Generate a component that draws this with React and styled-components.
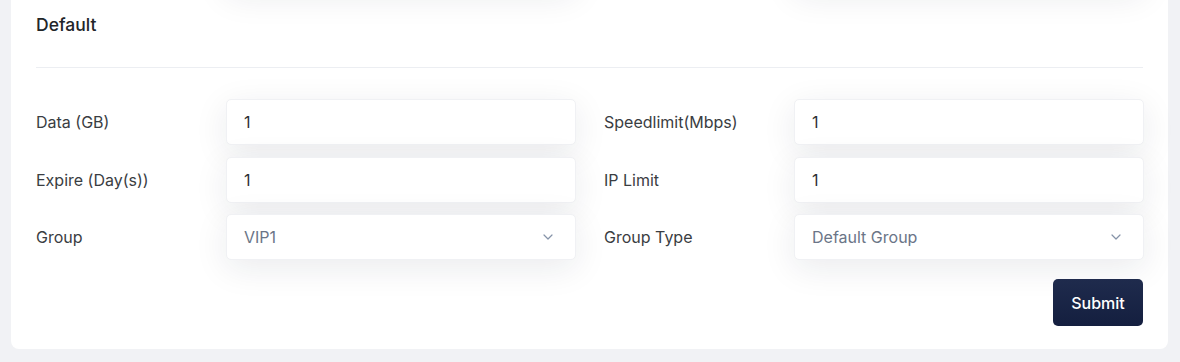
import React from 'react';
import styled, { createGlobalStyle } from 'styled-components';

const GlobalStyle = createGlobalStyle`
  html, body {
    margin: 0;
    padding: 0;
    background: #f1f2f5;
    font-family: Inter, "Noto Sans", sans-serif;
  }
  html {
    overflow: hidden;
  }
`;

const Page = styled.div`
  display: flow-root;
  padding: 0 12px 13px 11px;
`;

const Card = styled.div`
  margin-top: -100px;
  background: #fff;
  border-radius: 8px;
  padding: 42px 25px 23px;
`;

const FieldGrid = styled.div`
  display: grid;
  grid-template-columns: 190px 350px 218px 350px;
  row-gap: 11.5px;
  align-items: center;
`;

const Header = styled.div`
  padding: 13px 0 30px;
  margin-top: 12px;
  border-bottom: 1px solid #eceef2;
  margin-bottom: 31px;
`;

const Title = styled.h3`
  margin: 0;
  font-size: 17.5px;
  line-height: 24px;
  font-weight: 500;
  color: #222529;
`;

const Label = styled.label`
  font-size: 16px;
  font-weight: 400;
  color: #3a3d42;
  padding-left: ${p => (p.$second ? '28px' : '0')};
`;

const Field = styled.div`
  height: 46px;
  box-sizing: border-box;
  background: #fff;
  border: 1px solid #f0f1f4;
  border-radius: 5px;
  box-shadow: 0 8px 34px rgba(20, 30, 50, 0.09);
  padding: 0 20px 0 17px;
  display: flex;
  align-items: center;
  justify-content: space-between;
  font-size: 16px;
  color: ${p => (p.$muted ? '#6b7587' : '#2c2f33')};
`;

const Chevron = styled.svg`
  width: 10px;
  height: 6px;
  color: #8593a8;
  margin-right: 2px;
`;

const Actions = styled.div`
  display: flex;
  justify-content: flex-end;
  margin-top: 19px;
`;

const SubmitButton = styled.button`
  width: 90px;
  height: 47px;
  border: none;
  border-radius: 5px;
  background: linear-gradient(180deg, #1f2b4d 0%, #141f3f 100%);
  color: #fff;
  font-family: Inter, "Noto Sans", sans-serif;
  font-size: 16px;
  font-weight: 500;
  cursor: pointer;
`;

const Select = ({ value }) => (
  <Field $muted>
    <span>{value}</span>
    <Chevron viewBox="0 0 10 6" fill="none" stroke="currentColor" strokeWidth="1.2" strokeLinecap="round" strokeLinejoin="round">
      <path d="M1 1l4 4 4-4" />
    </Chevron>
  </Field>
);

export default function App() {
  return (
    <Page>
      <GlobalStyle />
      <Card>
        {/* tail of the section above, only its shadow shows */}
        <FieldGrid>
          <Label />
          <Field />
          <Label $second />
          <Field />
        </FieldGrid>
        <Header>
          <Title>Default</Title>
        </Header>
        <FieldGrid>
          <Label>Data (GB)</Label>
          <Field>1</Field>
          <Label $second>Speedlimit(Mbps)</Label>
          <Field>1</Field>

          <Label>Expire (Day(s))</Label>
          <Field>1</Field>
          <Label $second>IP Limit</Label>
          <Field>1</Field>

          <Label>Group</Label>
          <Select value="VIP1" />
          <Label $second>Group Type</Label>
          <Select value="Default Group" />
        </FieldGrid>
        <Actions>
          <SubmitButton>Submit</SubmitButton>
        </Actions>
      </Card>
    </Page>
  );
}
